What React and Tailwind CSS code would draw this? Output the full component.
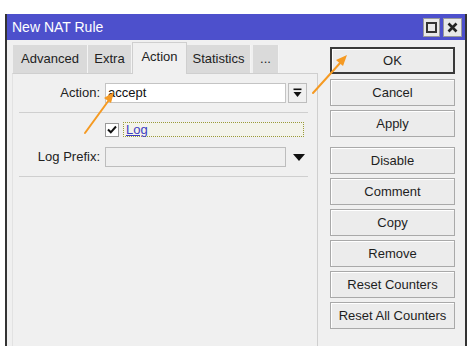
import React from "react";

const Btn = ({ label, focus, className = "" }) => (
  <div
    className={`h-[27px] flex items-center justify-center text-[13px] text-[#1e1e1e] bg-[#ececec] shadow-[inset_1px_1px_0_#fff] ${
      focus ? "border-2 border-[#3a3a3a]" : "border border-[#a9a9a9]"
    } ${className}`}
  >
    {label}
  </div>
);

const Tab = ({ label, active, w }) => (
  <div
    className={`flex items-center justify-center text-[13px] text-[#222] ${w} ${
      active
        ? "h-[32px] bg-[#f0f0f0] border border-b-0 border-[#cfcfcf] relative z-10 -mb-px pb-[3px]"
        : "h-[28px] bg-[#dadada] border-r border-[#f4f4f4]"
    }`}
  >
    {label}
  </div>
);

export default function App() {
  return (
    <div className="w-[474px] h-[355px] bg-white relative overflow-hidden font-['Liberation_Sans',Arial,sans-serif]">
      <div className="ml-[5px] mt-[14px] w-[462px] h-[332px] border-x-2 border-[#333] flex flex-col bg-[#f0f0f0]">
        {/* title bar */}
        <div className="h-[26px] bg-[#4d50cc] flex items-center justify-between pl-[5px] pr-[3px]">
          <span className="text-white text-[14px]">New NAT Rule</span>
          <div className="flex gap-[3px]">
            <div className="w-[17px] h-[19px] bg-[#e8e8e8] border border-[#9a9a9a] flex items-center justify-center">
              <div className="w-[11px] h-[11px] border-2 border-[#333]" />
            </div>
            <div className="w-[19px] h-[19px] bg-[#e8e8e8] border border-[#9a9a9a] flex items-center justify-center">
              <svg width="11" height="11" viewBox="0 0 11 11">
                <path d="M1.5 1.5 L9.5 9.5 M9.5 1.5 L1.5 9.5" stroke="#222" strokeWidth="2.6" />
              </svg>
            </div>
          </div>
        </div>

        {/* body */}
        <div className="flex-1 flex pl-[5px]">
          {/* left: tabs + panel */}
          <div className="w-[306px] flex flex-col pt-[2px]">
            <div className="flex items-end pl-px">
              <Tab label="Advanced" w="w-[75px]" />
              <Tab label="Extra" w="w-[44px]" />
              <Tab label="Action" active w="w-[55px]" />
              <Tab label="Statistics" w="w-[64px]" />
              <div className="w-[2px]" />
              <Tab label="..." w="w-[26px]" />
            </div>
            <div className="flex-1 border-t border-r border-l border-[#cfcfcf] border-l-[#e2e2e2] pt-[9px]">
              {/* Action row */}
              <div className="flex items-center h-[20px]">
                <div className="w-[92px] text-right pr-[5px] text-[13px] text-[#222]">Action:</div>
                <div className="w-[181px] h-[20px] bg-white border border-[#c4c4c4] flex items-center pl-[2px] text-[13px] text-[#111]">
                  accept
                </div>
                <div className="ml-[2px] w-[19px] h-[20px] bg-[#f0f0f0] border border-[#bdbdbd] flex items-center justify-center">
                  <svg width="9" height="10" viewBox="0 0 9 10">
                    <rect x="0.5" y="0.5" width="8" height="1.6" fill="#111" />
                    <path d="M0.5 4 H8.5 L4.5 9 Z" fill="#111" />
                  </svg>
                </div>
              </div>
              <div className="mt-[9px] ml-[6px] mr-[9px] h-px bg-[#cfcfcf]" />

              {/* Log row */}
              <div className="flex items-center mt-[9px] h-[15px]">
                <div className="w-[92px]" />
                <div className="w-[14px] h-[14px] bg-white border border-[#9a9a9a] flex items-center justify-center">
                  <svg width="10" height="9" viewBox="0 0 10 9">
                    <path d="M1 4.5 L3.8 7.3 L9 1.5" stroke="#111" strokeWidth="2" fill="none" />
                  </svg>
                </div>
                <div className="ml-[4px] w-[181px] h-[15px] border border-dotted border-[#9a9a3a] bg-[#f3f3ea] flex items-center pl-[2px] text-[13px] text-[#3c3cc4] underline leading-none">
                  Log
                </div>
              </div>

              {/* Log Prefix row */}
              <div className="flex items-center mt-[10px] h-[20px]">
                <div className="w-[92px] text-right pr-[5px] text-[13px] text-[#222]">Log Prefix:</div>
                <div className="w-[181px] h-[20px] bg-[#efefef] border border-[#bdbdbd]" />
                <svg className="ml-[7px]" width="12" height="7" viewBox="0 0 12 7">
                  <path d="M0 0 H12 L6 7 Z" fill="#111" />
                </svg>
              </div>
              <div className="mt-[9px] ml-[6px] mr-[9px] h-px bg-[#cfcfcf]" />
            </div>
          </div>

          {/* right: buttons */}
          <div className="ml-[12px] w-[125px] flex flex-col pt-[7px]">
            <Btn label="OK" focus />
            <Btn label="Cancel" className="mt-[5px]" />
            <Btn label="Apply" className="mt-[4px]" />
            <Btn label="Disable" className="mt-[10px]" />
            <Btn label="Comment" className="mt-[4px]" />
            <Btn label="Copy" className="mt-[4px]" />
            <Btn label="Remove" className="mt-[4px]" />
            <Btn label="Reset Counters" className="mt-[4px]" />
            <Btn label="Reset All Counters" className="mt-[4px]" />
          </div>
        </div>
      </div>

      {/* annotation arrows */}
      <svg className="absolute inset-0 pointer-events-none" width="474" height="355" viewBox="0 0 474 355">
        <g stroke="#f59a23" strokeWidth="2" fill="#f59a23" strokeLinecap="round">
          <line x1="85" y1="133" x2="109" y2="100" />
          <path d="M114 92 L104 98 L111 103 Z" stroke="none" />
          <line x1="313" y1="93" x2="341" y2="62" />
          <path d="M347 55 L336 60 L343 66 Z" stroke="none" />
        </g>
      </svg>
    </div>
  );
}
